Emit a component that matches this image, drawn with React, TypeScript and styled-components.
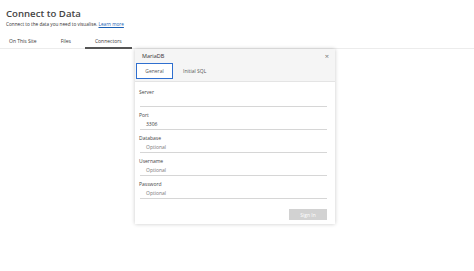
import React from "react";
import styled, { createGlobalStyle } from "styled-components";

const Global = createGlobalStyle`
  html, body { margin: 0; padding: 0; background: #ffffff; }
  body { font-family: "Open Sans", "Liberation Sans", sans-serif; color: #333; }
  #root { width: 474px; height: 271px; position: relative; overflow: hidden; }
`;

const Page = styled.div`
  width: 474px;
  height: 271px;
  position: relative;
  background: #fff;
`;

const Header = styled.header`
  padding: 7px 0 0 6px;
`;

const Title = styled.h1`
  margin: 0;
  font-size: 9.6px;
  line-height: 13px;
  font-weight: 600;
  color: #444;
`;

const Subtitle = styled.p`
  margin: 1px 0 0 0;
  font-size: 4.7px;
  line-height: 7px;
  color: #333;
  a { color: #1a5fb4; text-decoration: underline; }
`;

const TabBar = styled.nav`
  display: flex;
  gap: 4px;
  margin-top: 9px;
  margin-left: -1px;
  border-bottom: 1px solid #ececec;
`;

const PageTab = styled.div<{ $active?: boolean }>`
  padding: 0 10px;
  height: 10px;
  font-size: 5px;
  line-height: 8px;
  color: #3a3a3a;
  border-bottom: 2px solid ${(p) => (p.$active ? "#555" : "transparent")};
  margin-bottom: -1px;
`;

const Dialog = styled.div`
  position: absolute;
  left: 135px;
  top: 49px;
  width: 200px;
  height: 175px;
  background: #fff;
  box-shadow: 0 0 4px rgba(0, 0, 0, 0.22);
  display: flex;
  flex-direction: column;
`;

const DialogHead = styled.div`
  background: #f5f5f5;
  border-bottom: 1px solid #e4e4e4;
  height: 32px;
  display: flex;
  flex-direction: column;
`;

const TitleRow = styled.div`
  display: flex;
  justify-content: space-between;
  align-items: center;
  height: 14px;
  padding: 0 6px 0 7px;
  font-size: 5.5px;
  color: #333;
`;

const Close = styled.span`
  font-size: 7.5px;
  line-height: 8px;
  color: #777;
`;

const DialogTabs = styled.div`
  display: flex;
  align-items: center;
  gap: 10px;
  padding-left: 1px;
`;

const DialogTab = styled.div<{ $active?: boolean }>`
  width: ${(p) => (p.$active ? "37px" : "auto")};
  height: ${(p) => (p.$active ? "16px" : "auto")};
  box-sizing: border-box;
  border: ${(p) => (p.$active ? "1.5px solid #2f6fcf" : "none")};
  background: ${(p) => (p.$active ? "#fff" : "transparent")};
  display: flex;
  align-items: center;
  justify-content: center;
  font-size: 5px;
  color: #555;
`;

const Form = styled.div`
  padding: 6px 8px 0 4px;
  display: flex;
  flex-direction: column;
  flex: 1;
`;

const Field = styled.div`
  display: flex;
  flex-direction: column;
  margin-bottom: 4px;
`;

const Label = styled.div`
  height: 8px;
  line-height: 8px;
  font-size: 5px;
  color: #444;
`;

const Input = styled.div<{ $placeholder?: boolean }>`
  height: 10px;
  line-height: 10px;
  margin-left: 1px;
  padding-left: 6px;
  border-bottom: 1px solid #d6d6d6;
  font-size: 5px;
  color: ${(p) => (p.$placeholder ? "#777" : "#333")};
`;

const Footer = styled.div`
  display: flex;
  justify-content: flex-end;
  margin-top: 6px;
`;

const SignIn = styled.button`
  width: 38px;
  height: 11px;
  border: none;
  background: #d2d2d2;
  color: #fff;
  font-family: inherit;
  font-size: 5px;
  padding: 0;
`;

const fields: { label: string; value: string; placeholder?: boolean }[] = [
  { label: "Server", value: "" },
  { label: "Port", value: "3306" },
  { label: "Database", value: "Optional", placeholder: true },
  { label: "Username", value: "Optional", placeholder: true },
  { label: "Password", value: "Optional", placeholder: true },
];

export default function App() {
  return (
    <Page>
      <Global />
      <Header>
        <Title>Connect to Data</Title>
        <Subtitle>
          Connect to the data you need to visualise. <a>Learn more</a>
        </Subtitle>
      </Header>
      <TabBar>
        <PageTab>On This Site</PageTab>
        <PageTab>Files</PageTab>
        <PageTab $active>Connectors</PageTab>
      </TabBar>
      <Dialog>
        <DialogHead>
          <TitleRow>
            <span>MariaDB</span>
            <Close>×</Close>
          </TitleRow>
          <DialogTabs>
            <DialogTab $active>General</DialogTab>
            <DialogTab>Initial SQL</DialogTab>
          </DialogTabs>
        </DialogHead>
        <Form>
          {fields.map((f) => (
            <Field key={f.label}>
              <Label>{f.label}</Label>
              <Input $placeholder={f.placeholder}>{f.value}</Input>
            </Field>
          ))}
          <Footer>
            <SignIn>Sign In</SignIn>
          </Footer>
        </Form>
      </Dialog>
    </Page>
  );
}
